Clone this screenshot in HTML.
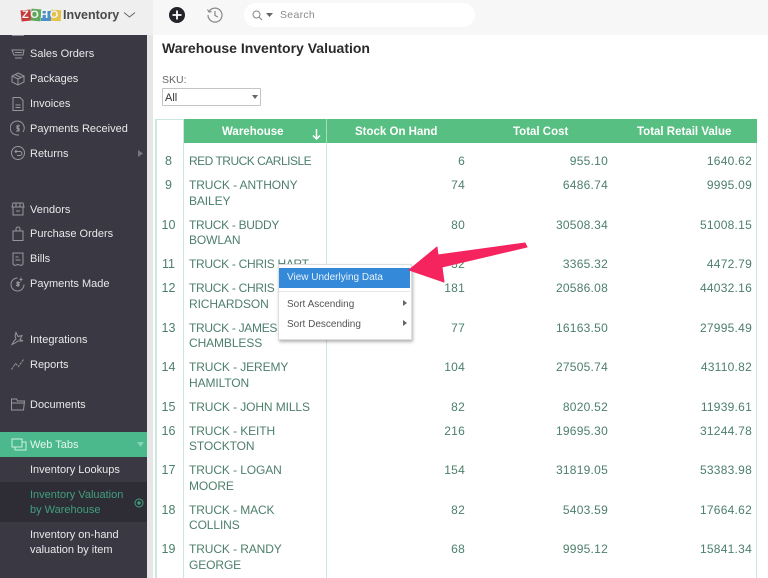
<!DOCTYPE html>
<html><head><meta charset="utf-8"><style>
html,body{margin:0;padding:0;width:768px;height:578px;overflow:hidden;background:#fff}
body{position:relative;font-family:"Liberation Sans",sans-serif;filter:blur(.35px)}
div,span,svg{position:absolute;white-space:nowrap}
.s{left:30px;color:#e8e8ea;font-size:11px;letter-spacing:0;line-height:14px}
.i{left:10px;width:16px;height:16px;fill:none;stroke:#97979e;stroke-width:1}
.n{width:27px;left:155px;text-align:center;color:#4d7f6b;font-size:12.5px;line-height:16px}
.w{left:189px;color:#4d7f6b;font-size:12px;letter-spacing:-.1px;line-height:16px}
.a,.b,.c{text-align:right;color:#4d7f6b;font-size:12px;letter-spacing:.25px;line-height:16px;width:90px}
.a{left:375px}.b{left:518px}.c{left:662px}
.h{color:#fff;font-weight:bold;font-size:11.5px;line-height:16px;top:124px}
.m{left:287px;font-size:10px;color:#555;line-height:14px}
</style></head><body>
<div style="left:0;top:0;width:768px;height:35px;background:#f7f7f7"></div>
<div style="left:0;top:0;width:153px;height:35px;background:#efefef"></div>
<div style="left:0;top:35px;width:147px;height:543px;background:#3a3943"></div>
<div style="left:147px;top:35px;width:6px;height:543px;background:#e6e6e6"></div>

<!-- logo -->
<div style="left:21px;top:10px;width:10px;height:11px;background:#c8393b;transform:rotate(-6deg)"></div>
<div style="left:31px;top:9px;width:10px;height:12px;background:#5fa85b;transform:rotate(5deg)"></div>
<div style="left:41px;top:11px;width:10px;height:10px;background:#4a90c8"></div>
<div style="left:51px;top:10px;width:10px;height:11px;background:#e6c24a;transform:rotate(3deg)"></div>
<span style="left:22px;top:9px;font-size:11px;font-weight:bold;color:#f3f3f3;line-height:13px;letter-spacing:1.500px">ZOHO</span>
<span style="left:63px;top:7px;font-size:12.500px;font-weight:bold;color:#4a4a4a;line-height:17px">Inventory</span>
<svg style="left:123px;top:11px;width:13px;height:8px" viewBox="0 0 13 8"><path d="M1 1.500l5.500 4.500 5.500-4.500" fill="none" stroke="#666" stroke-width="1"/></svg>

<!-- top bar -->
<svg style="left:168px;top:6px;width:18px;height:18px" viewBox="0 0 18 18"><circle cx="9" cy="9" r="8" fill="#23232b"/><path d="M9 4.500v9M4.500 9h9" stroke="#fff" stroke-width="1.800"/></svg>
<svg style="left:206px;top:6px;width:18px;height:18px" viewBox="0 0 18 18"><path d="M3 5.500A7 7 0 1 1 2 9M1.500 3.500L3 6l2.500-.5M9 5v4.500l3 1.500" fill="none" stroke="#888" stroke-width="1.200"/></svg>
<div style="left:244px;top:3px;width:231px;height:24px;background:#fff;border-radius:12px"></div>
<svg style="left:252px;top:10px;width:11px;height:11px" viewBox="0 0 11 11"><circle cx="4.500" cy="4.500" r="3.500" fill="none" stroke="#888"/><path d="M7 7l3 3" stroke="#888"/></svg>
<svg style="left:266px;top:13px;width:7px;height:4px" viewBox="0 0 7 4"><path d="M0 0h7L3.500 4z" fill="#666"/></svg>
<span style="left:280px;top:8px;font-size:10.500px;color:#8a8a8a;line-height:14px;letter-spacing:.3px">Search</span>

<!-- sidebar -->
<div style="left:12px;top:35px;width:12px;height:1px;background:#8e8e94"></div>
<svg class="i" style="top:46px" viewBox="0 0 16 16"><path d="M2 4h12l-1 5H4zM5 6.500h7M5 12h7"/></svg>
<span class="s" style="top:47px">Sales Orders</span>
<svg class="i" style="top:71px" viewBox="0 0 16 16"><path d="M8 2l6 3v6l-6 3-6-3V5zM2 5l6 3 6-3M8 8v6M5 3.500l6 3"/></svg>
<span class="s" style="top:72px">Packages</span>
<svg class="i" style="top:96px" viewBox="0 0 16 16"><path d="M3 1.500h7l3 3v10H3zM5.500 9h5M5.500 11.500h5"/></svg>
<span class="s" style="top:97px">Invoices</span>
<svg class="i" style="top:120px" viewBox="0 0 16 16"><path d="M13 12A7 7 0 1 0 9 14.800M8 4.500v7M10 6H7v2.500h2V11H6"/></svg>
<span class="s" style="top:122px">Payments Received</span>
<svg class="i" style="top:145px" viewBox="0 0 16 16"><circle cx="8" cy="8" r="6.500"/><path d="M5 6.500h5a2 2 0 0 1 0 4H7M6.500 4.800L5 6.500l1.500 1.500"/></svg>
<span class="s" style="top:147px">Returns</span>
<svg style="left:138px;top:150px;width:5px;height:7px" viewBox="0 0 5 7"><path d="M0 0l5 3.500L0 7z" fill="#77767e"/></svg>

<svg class="i" style="top:201px" viewBox="0 0 16 16"><path d="M3 2h10l1 4H2zM3 6v8h10V6M6 2v4M10 2v4M6 10h4"/></svg>
<span class="s" style="top:203px">Vendors</span>
<svg class="i" style="top:226px" viewBox="0 0 16 16"><path d="M3 5h10v9.500H3zM6 5V3a2 2 0 0 1 4 0v2"/></svg>
<span class="s" style="top:227px">Purchase Orders</span>
<svg class="i" style="top:251px" viewBox="0 0 16 16"><path d="M3 2h10v11l-1.600 1.500L8 13.500l-3.400 1L3 13zM5.500 6h3M5.500 9h5"/></svg>
<span class="s" style="top:252px">Bills</span>
<svg class="i" style="top:276px" viewBox="0 0 16 16"><path d="M14 8.500A6.500 6.500 0 1 1 7.500 2M8 5v6M10 6.500H7V8h2v1.500H6M11 1.500v4M9.500 3.500h3"/></svg>
<span class="s" style="top:277px">Payments Made</span>

<svg class="i" style="top:331px" viewBox="0 0 16 16"><path d="M6 1.500l2 4 4-1-2 4 3 1.500H8l-3 2-3 1.500 2-3.500 2-2-1-3z"/></svg>
<span class="s" style="top:333px">Integrations</span>
<svg class="i" style="top:356px" viewBox="0 0 16 16"><path d="M1.500 13.500l4-6 3 3 5-7" stroke-dasharray="2.500 1"/></svg>
<span class="s" style="top:358px">Reports</span>
<svg class="i" style="top:396px" viewBox="0 0 16 16"><path d="M1.500 3h5l1 2h7l-1 9h-12zM1.500 7h13"/></svg>
<span class="s" style="top:398px">Documents</span>

<div style="left:0;top:432px;width:147px;height:25px;background:#4cb98c"></div>
<svg class="i" style="left:11px;top:436px;stroke:#cdeee0" viewBox="0 0 16 16"><path d="M1 3h10v8H1zM4 11v3h11V6h-4"/></svg>
<span class="s" style="top:438px;color:#e4f6ee">Web Tabs</span>
<svg style="left:137px;top:442px;width:7px;height:5px" viewBox="0 0 7 5"><path d="M0 0h7L3.500 5z" fill="#84d3b2"/></svg>
<span class="s" style="top:463px">Inventory Lookups</span>
<div style="left:0;top:482px;width:147px;height:40px;background:#2e2d36"></div>
<span class="s" style="top:488px;color:#3f9f7d">Inventory Valuation</span>
<span class="s" style="top:503px;color:#3f9f7d">by Warehouse</span>
<svg style="left:134px;top:498px;width:10px;height:10px" viewBox="0 0 10 10"><circle cx="5" cy="5" r="4" fill="none" stroke="#3f9f7d"/><circle cx="5" cy="5" r="1.700" fill="#3f9f7d"/></svg>
<span class="s" style="top:528px">Inventory on-hand</span>
<span class="s" style="top:543px">valuation by item</span>

<!-- content -->
<span style="left:162px;top:39px;font-size:14px;font-weight:bold;color:#2a2a2a;line-height:18px">Warehouse Inventory Valuation</span>
<span style="left:162px;top:74px;font-size:10.500px;color:#666;line-height:13px">SKU:</span>
<div style="left:162px;top:88px;width:97px;height:16px;border:1px solid #c4c4c4;border-radius:1px;background:#fff"></div>
<span style="left:165px;top:91px;font-size:11px;color:#333;line-height:14px">All</span>
<svg style="left:252px;top:95px;width:6px;height:4px" viewBox="0 0 6 4"><path d="M0 0h6L3 4z" fill="#666"/></svg>

<!-- table -->
<div style="left:155px;top:119px;width:602px;height:459px;box-sizing:border-box;border:1px solid #cbe7df;border-left-width:2px;border-bottom:0"></div>
<div style="left:183px;top:119px;width:574px;height:24px;background:#57bf81"></div>
<div style="left:183px;top:119px;width:1px;height:459px;background:#cbe7df"></div>
<div style="left:326px;top:119px;width:1px;height:459px;background:#cbe7df"></div>
<div style="left:326px;top:119px;width:1px;height:24px;background:#a6dcbc"></div>
<span class="h" style="left:222px">Warehouse</span>
<svg style="left:312px;top:129px;width:9px;height:11px" viewBox="0 0 9 11"><path d="M4.500 0v10M1 6.500l3.500 3.500L8 6.500" fill="none" stroke="#fff" stroke-width="1.500"/></svg>
<span class="h" style="left:355px">Stock On Hand</span>
<span class="h" style="left:513px">Total Cost</span>
<span class="h" style="left:637px">Total Retail Value</span>

<span class="n" style="top:153px">8</span><span class="w" style="top:153px;letter-spacing:-.5px">RED TRUCK CARLISLE</span><span class="a" style="top:153px">6</span><span class="b" style="top:153px">955.10</span><span class="c" style="top:153px">1640.62</span>
<span class="n" style="top:177px">9</span><span class="w" style="top:177px">TRUCK - ANTHONY</span><span class="w" style="top:193px">BAILEY</span><span class="a" style="top:177px">74</span><span class="b" style="top:177px">6486.74</span><span class="c" style="top:177px">9995.09</span>
<span class="n" style="top:217px">10</span><span class="w" style="top:217px;letter-spacing:-.3px">TRUCK - BUDDY</span><span class="w" style="top:232px">BOWLAN</span><span class="a" style="top:217px">80</span><span class="b" style="top:217px">30508.34</span><span class="c" style="top:217px">51008.15</span>
<span class="n" style="top:256px">11</span><span class="w" style="top:256px;letter-spacing:-.3px">TRUCK - CHRIS HART</span><span class="a" style="top:256px">32</span><span class="b" style="top:256px">3365.32</span><span class="c" style="top:256px">4472.79</span>
<span class="n" style="top:280px">12</span><span class="w" style="top:280px;letter-spacing:-.3px">TRUCK - CHRIS</span><span class="w" style="top:296px">RICHARDSON</span><span class="a" style="top:280px">181</span><span class="b" style="top:280px">20586.08</span><span class="c" style="top:280px">44032.16</span>
<span class="n" style="top:320px">13</span><span class="w" style="top:320px;letter-spacing:-.3px">TRUCK - JAMES</span><span class="w" style="top:335px">CHAMBLESS</span><span class="a" style="top:320px">77</span><span class="b" style="top:320px">16163.50</span><span class="c" style="top:320px">27995.49</span>
<span class="n" style="top:359px">14</span><span class="w" style="top:359px">TRUCK - JEREMY</span><span class="w" style="top:375px">HAMILTON</span><span class="a" style="top:359px">104</span><span class="b" style="top:359px">27505.74</span><span class="c" style="top:359px">43110.82</span>
<span class="n" style="top:399px">15</span><span class="w" style="top:399px">TRUCK - JOHN MILLS</span><span class="a" style="top:399px">82</span><span class="b" style="top:399px">8020.52</span><span class="c" style="top:399px">11939.61</span>
<span class="n" style="top:423px">16</span><span class="w" style="top:423px">TRUCK - KEITH</span><span class="w" style="top:438px">STOCKTON</span><span class="a" style="top:423px">216</span><span class="b" style="top:423px">19695.30</span><span class="c" style="top:423px">31244.78</span>
<span class="n" style="top:462px">17</span><span class="w" style="top:462px">TRUCK - LOGAN</span><span class="w" style="top:478px">MOORE</span><span class="a" style="top:462px">154</span><span class="b" style="top:462px">31819.05</span><span class="c" style="top:462px">53383.98</span>
<span class="n" style="top:502px">18</span><span class="w" style="top:502px">TRUCK - MACK</span><span class="w" style="top:517px">COLLINS</span><span class="a" style="top:502px">82</span><span class="b" style="top:502px">5403.59</span><span class="c" style="top:502px">17664.62</span>
<span class="n" style="top:541px">19</span><span class="w" style="top:541px">TRUCK - RANDY</span><span class="w" style="top:557px">GEORGE</span><span class="a" style="top:541px">68</span><span class="b" style="top:541px">9995.12</span><span class="c" style="top:541px">15841.34</span>

<!-- context menu -->
<div style="left:278px;top:264px;width:132px;height:74px;background:#fff;border:1px solid #ddd;box-shadow:1px 2px 3px rgba(0,0,0,.3)"></div>
<div style="left:279px;top:268px;width:131px;height:20px;background:#3489d8"></div>
<div style="left:279px;top:291px;width:131px;height:1px;background:#e6e6e6"></div>
<span class="m" style="top:271px;color:#e8f2fb;font-size:10px">View Underlying Data</span>
<span class="m" style="top:298px;line-height:14px">Sort Ascending</span>
<span class="m" style="top:318px;line-height:14px">Sort Descending</span>
<svg style="left:403px;top:300px;width:4px;height:6px" viewBox="0 0 4 6"><path d="M0 0l4 3-4 3z" fill="#666"/></svg>
<svg style="left:403px;top:320px;width:4px;height:6px" viewBox="0 0 4 6"><path d="M0 0l4 3-4 3z" fill="#666"/></svg>

<!-- arrow -->
<svg style="left:400px;top:230px;width:140px;height:60px" viewBox="0 0 140 60"><path d="M9 40L37 17l1 8 87-12 2 4-85 20 2 15z" fill="#f5245f" stroke="#f5245f" stroke-width="1" stroke-linejoin="round"/></svg>
</body></html>
